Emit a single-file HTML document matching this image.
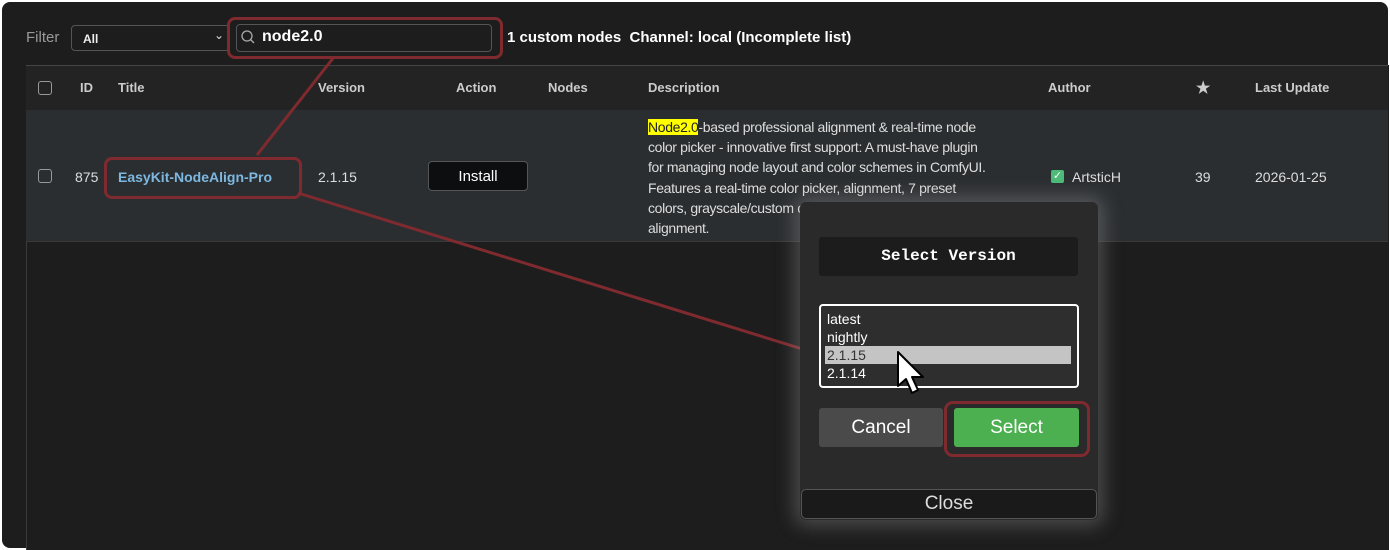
<!DOCTYPE html>
<html><head><style>
body{margin:0;width:1390px;height:550px;background:#fff;position:relative;overflow:hidden;font-family:"Liberation Sans",sans-serif;}
.panel{position:absolute;left:2px;top:2px;width:1386px;height:546px;background:#1d1d1d;border-radius:8px;overflow:hidden;}
.a{position:absolute;}
.t{color:#ddd;font-size:14px;}
.h{color:#ccc;font-size:13px;font-weight:bold;}
.cb{position:absolute;width:12px;height:12px;border:1px solid #999;border-radius:3px;}
.red{position:absolute;border:3px solid #7f2a2e;border-radius:8px;}
</style></head><body>
<div class="panel"></div>
<div class="a" style="left:26px;top:29px;color:#999;font-size:15px">Filter</div>
<div class="a" style="left:71px;top:25px;width:157px;height:24px;border:1px solid #555;border-radius:4px;background:#1d1d1d;"></div>
<div class="a" style="left:83px;top:32px;color:#eee;font-size:12px;font-weight:bold">All</div>
<div class="a" style="left:214px;top:28px;color:#ddd;font-size:12px">⌄</div>
<div class="a" style="left:236px;top:24px;width:254px;height:26px;border:1px solid #555;border-radius:4px;background:#1d1d1d;"></div>
<svg class="a" style="left:240px;top:29px" width="16" height="16"><circle cx="7" cy="7" r="5" fill="none" stroke="#aaa" stroke-width="1.3"/><line x1="10.5" y1="10.5" x2="14" y2="14" stroke="#aaa" stroke-width="1.3"/></svg>
<div class="a" style="left:262px;top:28px;color:#fff;font-size:16px;font-weight:bold">node2.0</div>
<div class="a" style="left:507px;top:29px;color:#fff;font-size:15px;font-weight:bold">1 custom nodes&nbsp; Channel: local (Incomplete list)</div>
<div class="red" style="left:227px;top:17px;width:270px;height:36px"></div>

<div class="a" style="left:26px;top:65px;width:1362px;height:485px;border-left:1px solid #3a3a3a;background:#1d1d1d"></div>
<div class="a" style="left:26px;top:65px;width:1362px;height:44px;background:#232323;border-top:1px solid #444;border-bottom:1px solid #333"></div>
<div class="a" style="left:26px;top:110px;width:1362px;height:131px;background:#2b2e31;border-bottom:1px solid #3a3a3a"></div>
<div class="cb" style="left:38px;top:81px"></div>
<div class="a h" style="left:80px;top:80px">ID</div>
<div class="a h" style="left:118px;top:80px">Title</div>
<div class="a h" style="left:318px;top:80px">Version</div>
<div class="a h" style="left:456px;top:80px">Action</div>
<div class="a h" style="left:548px;top:80px">Nodes</div>
<div class="a h" style="left:648px;top:80px">Description</div>
<div class="a h" style="left:1048px;top:80px">Author</div>
<div class="a h" style="left:1196px;top:78px;font-size:16px">★</div>
<div class="a h" style="left:1255px;top:80px">Last Update</div>

<div class="cb" style="left:38px;top:169px"></div>
<div class="a t" style="left:75px;top:169px">875</div>
<div class="a" style="left:118px;top:169px;color:#7cb8e0;font-size:14px;font-weight:bold">EasyKit-NodeAlign-Pro</div>
<div class="red" style="left:104px;top:157px;width:192px;height:36px"></div>
<div class="a t" style="left:318px;top:169px">2.1.15</div>
<div class="a" style="left:428px;top:161px;width:98px;height:28px;background:#0c0e10;border:1px solid #555;border-radius:4px;color:#fff;font-size:15px;text-align:center;line-height:30px">Install</div>
<div class="a t" style="left:648px;top:117px;line-height:20.2px;white-space:nowrap;letter-spacing:-0.35px"><span style="background:#ffff00;color:#222">Node2.0</span>-based professional alignment &amp; real-time node<br>color picker - innovative first support: A must-have plugin<br>for managing node layout and color schemes in ComfyUI.<br>Features a real-time color picker, alignment, 7 preset<br>colors, grayscale/custom colors and<br>alignment.</div>
<div class="a" style="left:1051px;top:170px;width:13px;height:13px;background:#4cba78;border-radius:2px;color:#fff;font-size:11px;line-height:13px;text-align:center">✓</div>
<div class="a t" style="left:1072px;top:169px">ArtsticH</div>
<div class="a t" style="left:1195px;top:169px">39</div>
<div class="a t" style="left:1255px;top:169px">2026-01-25</div>

<svg class="a" style="left:0;top:0" width="1390" height="550"><line x1="334" y1="57" x2="257" y2="155" stroke="#7f2a2e" stroke-width="3"/><line x1="298" y1="193" x2="812" y2="352" stroke="#7f2a2e" stroke-width="3"/></svg>

<div class="a" style="left:800px;top:202px;width:298px;height:318px;background:#2a2a2a;border-radius:6px;box-shadow:0 0 18px 6px rgba(160,160,160,0.35)"></div>
<div class="a" style="left:819px;top:237px;width:259px;height:39px;background:#1c1c1c;border-radius:3px;color:#fff;font-family:'Liberation Mono',monospace;font-weight:bold;font-size:16px;text-align:center;line-height:39px">Select Version</div>
<div class="a" style="left:819px;top:304px;width:256px;height:80px;border:2px solid #fff;border-radius:4px;background:#2e2e2e"></div>
<div class="a" style="left:825px;top:346px;width:246px;height:18px;background:#c4c4c4"></div>
<div class="a" style="left:827px;top:310px;color:#fff;font-size:14px;line-height:18px">latest<br>nightly<br><span style="color:#333">2.1.15</span><br>2.1.14</div>
<svg class="a" style="left:895px;top:350px" width="34" height="50"><path d="M3 2 L3 36 L11 29 L17 43 L23 40 L17 27 L28 27 Z" fill="#fff" stroke="#000" stroke-width="2" stroke-linejoin="round"/></svg>
<div class="a" style="left:819px;top:408px;width:124px;height:39px;background:#4a4a4a;border-radius:3px;color:#fff;font-size:19px;text-align:center;line-height:39px">Cancel</div>
<div class="a" style="left:954px;top:408px;width:125px;height:39px;background:#4caf50;border-radius:3px;color:#fff;font-size:19px;text-align:center;line-height:39px">Select</div>
<div class="red" style="left:944px;top:401px;width:140px;height:50px;border-radius:9px"></div>
<div class="a" style="left:801px;top:489px;width:294px;height:28px;background:#1a1a1a;border:1px solid #555;border-radius:5px;color:#ddd;font-size:19px;text-align:center;line-height:28px">Close</div>
</body></html>
